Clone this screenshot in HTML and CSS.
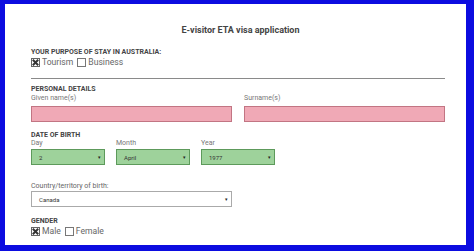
FILE: index.html
```html
<!DOCTYPE html>
<html lang="en">
<head>
  <meta charset="UTF-8">
  <meta name="viewport" content="width=device-width, initial-scale=1.0">
  <title>E-visitor ETA visa application</title>
  <link rel="stylesheet" href="styles.css">
</head>
<body>
  <div class="frame">
    <h1 class="title">E-visitor ETA visa application</h1>

    <div class="section-label first">YOUR PURPOSE OF STAY IN AUSTRALIA:</div>
    <div class="checks">
      <span class="check">
        <svg class="box" viewBox="0 0 9 9"><rect x="0.5" y="0.5" width="8" height="8" fill="#fff" stroke="#666"/><path d="M1.8 1.8 L7.2 7.2 M7.2 1.8 L1.8 7.2" stroke="#333" stroke-width="2"/></svg>
        Tourism
      </span>
      <span class="check">
        <svg class="box" viewBox="0 0 9 9"><rect x="0.5" y="0.5" width="8" height="8" fill="#fff" stroke="#777"/></svg>
        Business
      </span>
    </div>

    <hr class="divider">

    <div class="section-label">PERSONAL DETAILS</div>
    <div class="two-col">
      <div class="field">
        <div class="field-label">Given name(s)</div>
        <div class="input pink"></div>
      </div>
      <div class="field">
        <div class="field-label">Surname(s)</div>
        <div class="input pink"></div>
      </div>
    </div>

    <div class="section-label dob">DATE OF BIRTH</div>
    <div class="three-col">
      <div class="field">
        <div class="field-label">Day</div>
        <div class="select green"><span>2</span><span class="arrow">&#9662;</span></div>
      </div>
      <div class="field">
        <div class="field-label">Month</div>
        <div class="select green"><span>April</span><span class="arrow">&#9662;</span></div>
      </div>
      <div class="field">
        <div class="field-label">Year</div>
        <div class="select green"><span>1977</span><span class="arrow">&#9662;</span></div>
      </div>
    </div>

    <div class="field country">
      <div class="field-label">Country/territory of birth:</div>
      <div class="select plain"><span>Canada</span><span class="arrow">&#9662;</span></div>
    </div>

    <div class="section-label gender">GENDER</div>
    <div class="checks">
      <span class="check">
        <svg class="box" viewBox="0 0 9 9"><rect x="0.5" y="0.5" width="8" height="8" fill="#fff" stroke="#666"/><path d="M1.8 1.8 L7.2 7.2 M7.2 1.8 L1.8 7.2" stroke="#333" stroke-width="2"/></svg>
        Male
      </span>
      <span class="check">
        <svg class="box" viewBox="0 0 9 9"><rect x="0.5" y="0.5" width="8" height="8" fill="#fff" stroke="#777"/></svg>
        Female
      </span>
    </div>
  </div>
</body>
</html>
```

FILE: styles.css
```css
* {
  box-sizing: border-box;
  margin: 0;
  padding: 0;
}

body {
  font-family: Roboto, 'Liberation Sans', sans-serif;
  background: #0c0ce0;
  width: 474px;
  height: 251px;
  overflow: hidden;
}

.frame {
  width: 474px;
  height: 251px;
  background: #ffffff;
  border-style: solid;
  border-color: #0c0ce0;
  border-width: 4px 8px 6px 5px;
  padding: 20px 21px 0 26px;
  color: #444;
}

.title {
  font-size: 9px;
  font-weight: bold;
  line-height: 12px;
  text-align: center;
  color: #444;
  padding-left: 5px;
}

.section-label {
  font-size: 7px;
  font-weight: bold;
  line-height: 9px;
  color: #444;
  margin-top: 6px;
}

.section-label.first {
  margin-top: 12px;
}

.section-label.dob {
  margin-top: 9px;
  line-height: 8px;
}

.section-label.gender {
  margin-top: 10px;
}

.checks {
  display: flex;
  gap: 4px;
  font-size: 8.6px;
  line-height: 11px;
  color: #666;
}

.check {
  display: flex;
  align-items: center;
  gap: 2px;
}

.box {
  width: 9px;
  height: 9px;
}

.divider {
  border: none;
  border-top: 1px solid #8a8a8a;
  margin-top: 10px;
  width: 414px;
}

.field-label {
  font-size: 7px;
  line-height: 9px;
  color: #777;
}

.two-col {
  display: grid;
  grid-template-columns: 201px 201px;
  gap: 12px;
}

.three-col {
  display: grid;
  grid-template-columns: 74px 74px 74px;
  gap: 11px;
}

.input,
.select {
  height: 16px;
  margin-top: 3px;
}

.select {
  margin-top: 1px;
}

.pink {
  background: #f0a9b6;
  border: 1px solid #c27583;
}

.select {
  display: flex;
  align-items: center;
  justify-content: space-between;
  padding: 0 3px 0 7px;
  font-size: 6px;
  color: #333;
}

.green {
  background: #9ed29b;
  border: 1px solid #5d9a5b;
}

.plain {
  background: #fff;
  border: 1px solid #aaa;
  width: 201px;
  margin-top: 0;
}

.arrow {
  font-size: 5px;
  color: #222;
}

.country {
  margin-top: 17px;
}

.country .field-label {
  color: #666;
}
```
